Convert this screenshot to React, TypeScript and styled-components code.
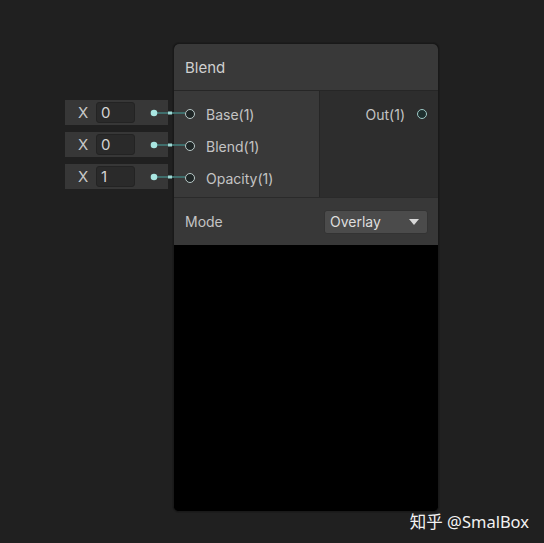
import styled, { createGlobalStyle } from 'styled-components';

const Global = createGlobalStyle`
  html, body {
    margin: 0;
    padding: 0;
    background: #202020;
  }
  body {
    font-family: Inter, "Noto Sans", "Noto Sans CJK SC", sans-serif;
    color: #c4c4c4;
  }
`;

const Page = styled.div`
  position: relative;
  width: 544px;
  height: 543px;
  display: flex;
  align-items: flex-start;
  padding: 43px 0 0 65px;
  box-sizing: border-box;
  background: #202020;
`;

const Inputs = styled.div`
  display: flex;
  flex-direction: column;
  gap: 7px;
  padding-top: 57px;
  width: 108px;
`;

const Field = styled.div`
  position: relative;
  display: flex;
  align-items: center;
  width: 103px;
  height: 25px;
  background: #373737;
  box-sizing: border-box;
  padding-left: 13px;
`;

const Axis = styled.span`
  font-size: 15px;
  color: #c8c8c8;
  width: 18px;
`;

const NumBox = styled.div`
  width: 39px;
  height: 21px;
  box-sizing: border-box;
  background: #2a2a2a;
  border: 1px solid #232323;
  border-radius: 3px;
  font-size: 15px;
  color: #d4d4d4;
  padding-left: 4px;
  line-height: 19px;
`;

const Wire = styled.svg`
  position: absolute;
  left: 85px;
  top: 6px;
  overflow: visible;
`;

const Node = styled.div`
  width: 264px;
  border: 1px solid #191919;
  border-radius: 6px;
  overflow: hidden;
  background: #000;
  box-shadow: 0 0 0 1px #1c1c1c;
`;

const Header = styled.div`
  height: 46px;
  display: flex;
  align-items: center;
  padding-left: 11px;
  background: #393939;
  border-bottom: 1px solid #262626;
  font-size: 15px;
  color: #d0d0d0;
`;

const Ports = styled.div`
  display: flex;
  height: 106px;
  border-bottom: 1px solid #2a2a2a;
`;

const InCol = styled.div`
  width: 146px;
  background: #393939;
  border-right: 1px solid #262626;
  padding-top: 7px;
  box-sizing: border-box;
`;

const OutCol = styled.div`
  flex: 1;
  background: #2d2d2d;
  padding-top: 7px;
`;

const PortRow = styled.div<{ $right?: boolean }>`
  height: 32px;
  display: flex;
  align-items: center;
  justify-content: ${p => (p.$right ? 'flex-end' : 'flex-start')};
  padding: ${p => (p.$right ? '0 11px 0 0' : '0 0 0 11px')};
  gap: ${p => (p.$right ? '12px' : '11px')};
  font-size: 14px;
  color: #c4c4c4;
`;

const Socket = styled.span<{ $dark?: boolean }>`
  width: 10px;
  height: 10px;
  box-sizing: border-box;
  border-radius: 50%;
  border: 1.5px solid ${p => (p.$dark ? '#b9c9c8' : '#9ec9c6')};
  background: ${p => (p.$dark ? '#1f2626' : '#1e2f2e')};
  flex-shrink: 0;
`;

const ModeRow = styled.div`
  height: 47px;
  display: flex;
  align-items: center;
  justify-content: space-between;
  padding: 0 10px 0 11px;
  background: #383838;
  font-size: 14px;
  color: #c4c4c4;
`;

const Select = styled.div`
  width: 104px;
  height: 24px;
  box-sizing: border-box;
  display: flex;
  align-items: center;
  justify-content: space-between;
  padding: 0 8px 0 5px;
  background: #4b4b4b;
  border: 1px solid #333;
  border-radius: 3px;
  color: #dedede;
  font-size: 14px;
`;

const Caret = styled.span`
  width: 0;
  height: 0;
  border-left: 5px solid transparent;
  border-right: 5px solid transparent;
  border-top: 6px solid #d8d8d8;
`;

const Preview = styled.div`
  height: 266px;
  background: #000;
`;

const Watermark = styled.div`
  position: absolute;
  right: 15px;
  bottom: 10px;
  font-size: 16.5px;
  color: #f2f2f2;
  font-family: "Noto Sans", "Noto Sans CJK SC", sans-serif;
`;

const inputs = [
  { value: '0', port: 'Base(1)' },
  { value: '0', port: 'Blend(1)' },
  { value: '1', port: 'Opacity(1)' },
];

export default function App() {
  return (
    <>
      <Global />
      <Page>
        <Inputs>
          {inputs.map((f, i) => (
            <Field key={i}>
              <Axis>X</Axis>
              <NumBox>{f.value}</NumBox>
              <Wire width="40" height="14">
                <line x1="4" y1="7" x2="35" y2="7" stroke="#3f6e6c" strokeWidth="2" />
                <rect x="18" y="5.5" width="4" height="3" fill="#9ed8d4" />
                <circle cx="4" cy="7" r="3.3" fill="#a9e6e1" />
              </Wire>
            </Field>
          ))}
        </Inputs>
        <Node>
          <Header>Blend</Header>
          <Ports>
            <InCol>
              {inputs.map((f, i) => (
                <PortRow key={i}>
                  <Socket $dark />
                  {f.port}
                </PortRow>
              ))}
            </InCol>
            <OutCol>
              <PortRow $right>
                Out(1)
                <Socket />
              </PortRow>
            </OutCol>
          </Ports>
          <ModeRow>
            Mode
            <Select>
              Overlay
              <Caret />
            </Select>
          </ModeRow>
          <Preview />
        </Node>
        <Watermark>知乎 @SmalBox</Watermark>
      </Page>
    </>
  );
}
